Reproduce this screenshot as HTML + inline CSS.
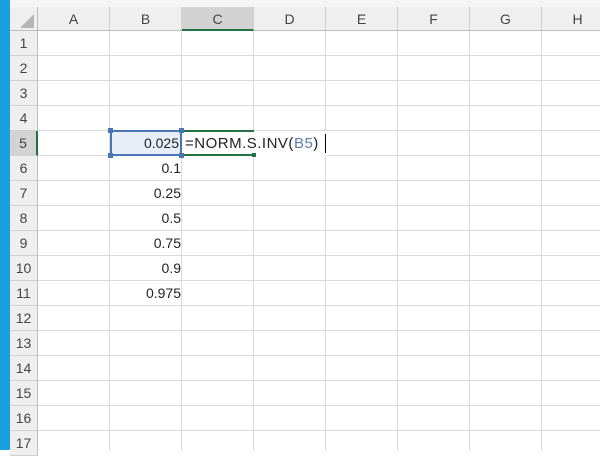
<!DOCTYPE html>
<html><head><style>
body{margin:0;width:600px;height:450px;overflow:hidden;background:#fff;font-family:"Liberation Sans",sans-serif;position:relative}
.a{position:absolute}
.ch{top:7px;height:24px;background:#efefef;border-right:1px solid #d0d0d0;box-sizing:border-box;text-align:center;line-height:24px;font-size:14px;color:#444;border-bottom:1px solid #bdbdbd}
.rh{left:10px;width:28px;height:25px;background:#efefef;border-bottom:1px solid #d0d0d0;border-right:1px solid #bdbdbd;box-sizing:border-box;text-align:center;line-height:25px;font-size:14px;color:#444}
.v{position:absolute;width:1px;top:31px;height:419px;background:#d9d9d9}
.h{position:absolute;height:1px;left:38px;width:562px;background:#d9d9d9}
.n{position:absolute;left:110px;width:71px;text-align:right;font-size:14px;color:#222;line-height:25px;height:25px}
</style></head><body>
<div class="a" style="left:0;top:0;width:10px;height:450px;background:#1aa0e0"></div>
<div class="a" style="left:10px;top:0;width:590px;height:7px;background:#f5f5f5"></div>
<div class="a" style="left:10px;top:7px;width:28px;height:24px;background:#efefef;border-right:1px solid #bdbdbd;border-bottom:1px solid #bdbdbd;box-sizing:border-box"></div>
<svg class="a" style="left:18px;top:12px" width="18" height="18"><polygon points="16,2 16,16 2,16" fill="#b5b5b5"/></svg>
<div class="a ch" style="left:38px;width:72px">A</div>
<div class="a ch" style="left:110px;width:72px">B</div>
<div class="a ch" style="left:182px;width:72px;background:#d3d3d3;border-bottom:2px solid #217346">C</div>
<div class="a ch" style="left:254px;width:72px">D</div>
<div class="a ch" style="left:326px;width:72px">E</div>
<div class="a ch" style="left:398px;width:72px">F</div>
<div class="a ch" style="left:470px;width:72px">G</div>
<div class="a ch" style="left:542px;width:72px">H</div>
<div class="a rh" style="top:31px">1</div>
<div class="a rh" style="top:56px">2</div>
<div class="a rh" style="top:81px">3</div>
<div class="a rh" style="top:106px">4</div>
<div class="a rh" style="top:131px;background:#d3d3d3;border-right:2px solid #217346">5</div>
<div class="a rh" style="top:156px">6</div>
<div class="a rh" style="top:181px">7</div>
<div class="a rh" style="top:206px">8</div>
<div class="a rh" style="top:231px">9</div>
<div class="a rh" style="top:256px">10</div>
<div class="a rh" style="top:281px">11</div>
<div class="a rh" style="top:306px">12</div>
<div class="a rh" style="top:331px">13</div>
<div class="a rh" style="top:356px">14</div>
<div class="a rh" style="top:381px">15</div>
<div class="a rh" style="top:406px">16</div>
<div class="a rh" style="top:431px">17</div>
<div class="v" style="left:109px"></div><div class="v" style="left:181px"></div><div class="v" style="left:253px"></div><div class="v" style="left:325px"></div><div class="v" style="left:397px"></div><div class="v" style="left:469px"></div><div class="v" style="left:541px"></div>
<div class="h" style="top:55px"></div><div class="h" style="top:80px"></div><div class="h" style="top:105px"></div><div class="h" style="top:130px"></div><div class="h" style="top:155px"></div><div class="h" style="top:180px"></div><div class="h" style="top:205px"></div><div class="h" style="top:230px"></div><div class="h" style="top:255px"></div><div class="h" style="top:280px"></div><div class="h" style="top:305px"></div><div class="h" style="top:330px"></div><div class="h" style="top:355px"></div><div class="h" style="top:380px"></div><div class="h" style="top:405px"></div><div class="h" style="top:430px"></div>
<div class="a" style="left:110px;top:131px;width:72px;height:25px;background:#e8eef8"></div>
<div class="a" style="left:182px;top:131px;width:145px;height:25px;background:#fff"></div>
<div class="a" style="left:183px;top:130px;width:71px;height:26px;border-top:2px solid #217346;border-bottom:2px solid #217346;box-sizing:border-box"></div>
<div class="a" style="left:110px;top:130px;width:72px;height:26px;border:2px solid #4a76b4;box-sizing:border-box"></div>
<div class="a" style="left:108px;top:128px;width:5px;height:5px;background:#4a76b4"></div>
<div class="a" style="left:179px;top:128px;width:5px;height:5px;background:#4a76b4"></div>
<div class="a" style="left:108px;top:153px;width:5px;height:5px;background:#4a76b4"></div>
<div class="a" style="left:179px;top:153px;width:5px;height:5px;background:#4a76b4"></div>
<div class="a" style="left:252px;top:153px;width:4px;height:4px;background:#217346"></div>
<div class="n" style="top:131px;width:69px">0.025</div>
<div class="a" style="left:185px;top:131px;line-height:25px;font-size:15px;letter-spacing:0.5px;color:#222">=NORM.S.INV(<span style="color:#5b7fb5">B5</span>)</div>
<div class="a" style="left:325px;top:134px;width:1px;height:19px;background:#000"></div>
<div class="n" style="top:156px">0.1</div>
<div class="n" style="top:181px">0.25</div>
<div class="n" style="top:206px">0.5</div>
<div class="n" style="top:231px">0.75</div>
<div class="n" style="top:256px">0.9</div>
<div class="n" style="top:281px">0.975</div>
</body></html>
